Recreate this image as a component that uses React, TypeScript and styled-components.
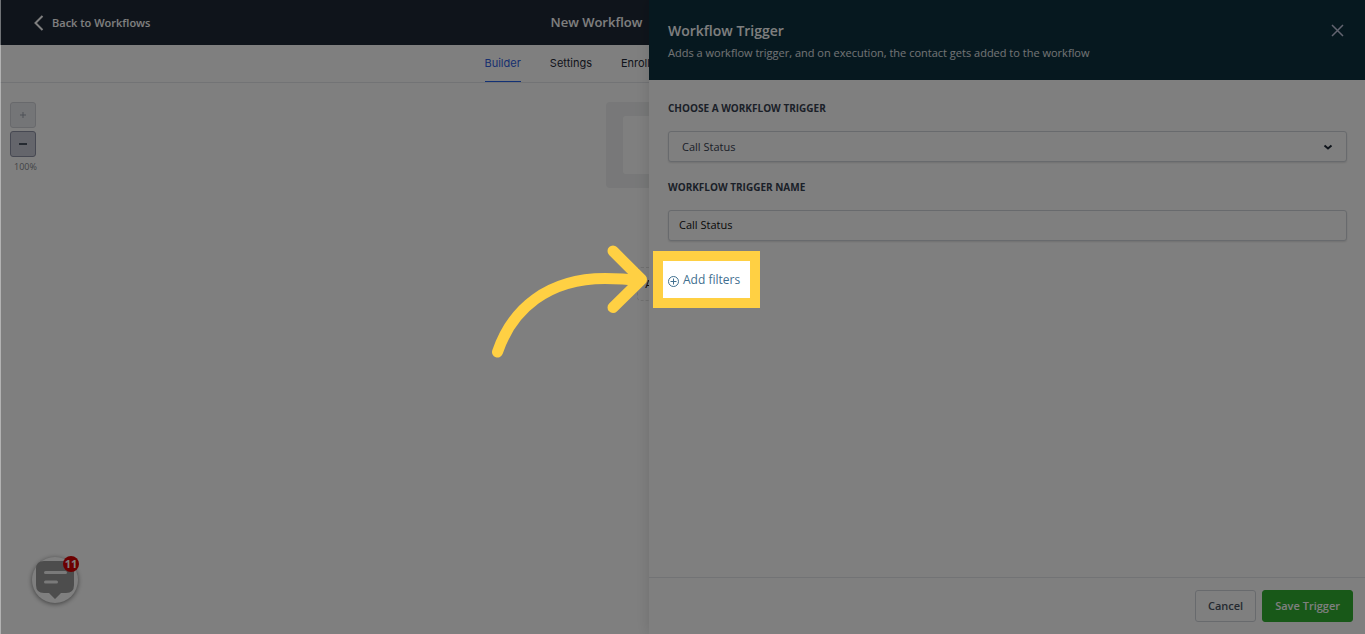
import React from "react";
import styled, { createGlobalStyle } from "styled-components";

const GlobalStyle = createGlobalStyle`
  *, *::before, *::after { box-sizing: border-box; }
  body { margin: 0; background: #fff; }
  body, button, input, select {
    font-family: "Open Sans", "Noto Sans", sans-serif;
    font-size: 11px;
    line-height: 16px;
  }
  h1, h2, p { margin: 0; }
`;

const Page = styled.div`
  position: relative;
  display: flex;
  flex-direction: column;
  min-height: 100vh;
  overflow: hidden;
  background: #fff;
`;

const TopBar = styled.header`
  display: grid;
  grid-template-columns: 1fr 264px 1fr;
  align-items: center;
  height: 45px;
  background: #1f2937;
  color: #fff;
`;

const BackLink = styled.a`
  display: flex;
  align-items: center;
  gap: 8px;
  padding-left: 34px;
  color: #fff;
  font-weight: 600;
  text-decoration: none;
`;

const PageTitle = styled.h1`
  padding-bottom: 2px;
  font-size: 13px;
  line-height: 20px;
  font-weight: 600;
`;

const TabBar = styled.nav`
  display: flex;
  justify-content: center;
  height: 38px;
  border-bottom: 1px solid #e5e7eb;
`;

const TabList = styled.div`
  display: flex;
  gap: 29px;
  width: 396px;
`;

const Tab = styled.a<{ $active?: boolean }>`
  padding: 10px 0;
  border-bottom: 1px solid ${(p) => (p.$active ? "#2563eb" : "transparent")};
  color: ${(p) => (p.$active ? "#3060e0" : "#1f2937")};
  font-family: Inter, sans-serif;
  white-space: nowrap;
  text-decoration: none;
`;

const Canvas = styled.main`
  position: relative;
  flex: 1;
  display: flex;
  flex-direction: column;
  align-items: center;
  gap: 79px;
  padding-top: 19px;
`;

const ZoomTools = styled.div`
  position: absolute;
  top: 19px;
  left: 10px;
  display: flex;
  flex-direction: column;
  gap: 3px;
`;

const ZoomButton = styled.button`
  display: grid;
  place-items: center;
  width: 26px;
  height: 26px;
  padding: 0;
  border: 1px solid #8c90a4;
  border-radius: 3px;
  background: #c8cad6;
  color: #4b5563;
  &:disabled {
    border-color: #d0d2d8;
    background: #e9eaee;
    color: #9ca3af;
  }
`;

const ZoomLevel = styled.span`
  padding-left: 4px;
  color: #85878c;
  font-size: 9px;
  line-height: 14px;
`;

const TriggerNode = styled.div`
  width: 153px;
  height: 86px;
  padding: 14px 17px;
  border-radius: 4px;
  background: #f0f1f2;
`;

const NodeCard = styled.div`
  height: 58px;
  border-radius: 3px;
  background: #fff;
`;

const ActionNode = styled.div`
  width: 91px;
  padding: 8px 7px;
  border: 1px dashed #e2e2e2;
  border-radius: 4px;
  color: #222;
  white-space: nowrap;
  font-family: Inter, sans-serif;
`;

const ChatButton = styled.button`
  position: absolute;
  left: 32px;
  bottom: 31px;
  width: 46px;
  height: 46px;
  padding: 0;
  border: 0;
  border-radius: 50%;
  background: #fff;
  box-shadow: 0 1px 5px rgba(0, 0, 0, 0.5);
  svg { display: block; }
`;

const ChatBadge = styled.span`
  position: absolute;
  top: -1px;
  right: -1px;
  width: 16px;
  height: 16px;
  border-radius: 50%;
  background: #d80000;
  color: #fff;
  font-weight: 700;
`;

const Drawer = styled.aside`
  position: absolute;
  inset: 0 0 0 auto;
  z-index: 1;
  display: flex;
  flex-direction: column;
  width: 716px;
  max-width: 100%;
  background: #fff;
  box-shadow: 0 0 14px rgba(0, 0, 0, 0.14);
`;

const DrawerHeader = styled.header`
  display: flex;
  justify-content: space-between;
  align-items: flex-start;
  height: 80px;
  padding: 21px 21px 0 19px;
  background: #0c303e;
  color: #fff;
`;

const DrawerTitle = styled.h2`
  font-size: 14px;
  line-height: 20px;
  font-weight: 600;
`;

const DrawerText = styled.p`
  padding-top: 4px;
  color: #e2e6e9;
`;

const CloseButton = styled.button`
  padding: 3px 0;
  border: 0;
  background: none;
  color: #c4c8e0;
  svg { display: block; }
`;

const DrawerBody = styled.div`
  flex: 1;
  display: flex;
  flex-direction: column;
  align-items: stretch;
  padding: 20px 18px 20px 19px;
`;

const FieldLabel = styled.label`
  margin-bottom: 15px;
  color: #374151;
  font-size: 10px;
  font-weight: 700;
  text-transform: uppercase;
`;

const SelectWrap = styled.div`
  position: relative;
  display: flex;
  margin-bottom: 17px;
  svg {
    position: absolute;
    top: 11px;
    right: 14px;
    pointer-events: none;
  }
`;

const fieldBox = `
  width: 100%;
  height: 31px;
  border: 1px solid #d1d5db;
  border-radius: 3px;
  background: #fff;
  box-shadow: 0 1px 2px rgba(0, 0, 0, 0.12);
`;

const Select = styled.select`
  ${fieldBox}
  appearance: none;
  padding: 0 13px;
  color: #374151;
`;

const TextInput = styled.input`
  ${fieldBox}
  margin-bottom: 20px;
  padding: 0 10px 2px;
  color: #111;
`;

const Spotlight = styled.div`
  position: relative;
  z-index: 2;
  align-self: flex-start;
  margin-left: -5px;
  &::before {
    content: "";
    position: absolute;
    inset: -10px;
    border: 10px solid #ffd043;
    box-shadow: 0 0 0 9999px rgba(0, 0, 0, 0.5);
    pointer-events: none;
  }
`;

const AddFilters = styled.button`
  display: flex;
  align-items: center;
  gap: 4px;
  width: 87px;
  height: 37px;
  padding: 0 5px;
  border: 0;
  background: #fff;
  color: #3f6f8f;
  font-size: 12px;
  white-space: nowrap;
  svg { flex: none; margin-top: 3px; }
`;

const Arrow = styled.svg`
  position: absolute;
  top: -21px;
  left: -177px;
  pointer-events: none;
`;

const DrawerFooter = styled.footer`
  display: flex;
  justify-content: flex-end;
  gap: 6px;
  padding: 12px;
  border-top: 1px solid #e5e7eb;
`;

const ActionButton = styled.button<{ $primary?: boolean }>`
  height: 32px;
  padding: 0 12px;
  border: 1px solid ${(p) => (p.$primary ? "#30b030" : "#d1d5db")};
  border-radius: 3px;
  background: ${(p) => (p.$primary ? "#30b030" : "#fff")};
  color: ${(p) => (p.$primary ? "#fff" : "#4b5563")};
  font-weight: 600;
`;

const EdgeLine = styled.div`
  position: absolute;
  inset: 0 auto 0 0;
  z-index: 3;
  width: 1px;
  background: rgba(255, 255, 255, 0.4);
`;

export default function App() {
  return (
    <Page>
      <GlobalStyle />
      <TopBar>
        <BackLink href="#workflows">
          <svg width="10" height="16" viewBox="0 0 10 16" fill="none" stroke="currentColor" strokeWidth="2">
            <path d="M8.5 1 1.5 8l7 7" />
          </svg>
          Back to Workflows
        </BackLink>
        <PageTitle>New Workflow</PageTitle>
      </TopBar>
      <TabBar>
        <TabList>
          <Tab href="#builder" $active>Builder</Tab>
          <Tab href="#settings">Settings</Tab>
          <Tab href="#enroll">Enroll</Tab>
        </TabList>
      </TabBar>
      <Canvas>
        <ZoomTools>
          <ZoomButton type="button" aria-label="Zoom in" disabled>
            <svg width="6" height="6" viewBox="0 0 6 6" stroke="currentColor">
              <path d="M3 0v6M0 3h6" />
            </svg>
          </ZoomButton>
          <ZoomButton type="button" aria-label="Zoom out">
            <svg width="8" height="2" viewBox="0 0 8 2" stroke="currentColor" strokeWidth="2">
              <path d="M0 1h8" />
            </svg>
          </ZoomButton>
          <ZoomLevel>100%</ZoomLevel>
        </ZoomTools>
        <TriggerNode>
          <NodeCard />
        </TriggerNode>
        <ActionNode>Add</ActionNode>
        <ChatButton type="button" aria-label="Open chat">
          <svg width="46" height="46" viewBox="0 0 46 46">
            <path
              fill="#9a9a9a"
              d="M12 4h22q8 0 8 8v16q0 8-8 8h-5l-6 6-6-6h-5q-8 0-8-8V12q0-8 8-8Z"
            />
            <path d="M13.500 15.500h20M13.500 25h11" stroke="#f4f4f4" strokeWidth="3" strokeLinecap="round" />
          </svg>
          <ChatBadge>11</ChatBadge>
        </ChatButton>
      </Canvas>

      <Drawer>
        <DrawerHeader>
          <div>
            <DrawerTitle>Workflow Trigger</DrawerTitle>
            <DrawerText>
              Adds a workflow trigger, and on execution, the contact gets added to the workflow
            </DrawerText>
          </div>
          <CloseButton type="button" aria-label="Close">
            <svg width="13" height="13" viewBox="0 0 13 13" stroke="currentColor" strokeWidth="1.500">
              <path d="m1 1 11 11M12 1 1 12" />
            </svg>
          </CloseButton>
        </DrawerHeader>
        <DrawerBody>
          <FieldLabel htmlFor="trigger">Choose a workflow trigger</FieldLabel>
          <SelectWrap>
            <Select id="trigger" defaultValue="call">
              <option value="call">Call Status</option>
            </Select>
            <svg width="10" height="10" viewBox="0 0 10 10" fill="none" stroke="#1f2937" strokeWidth="2">
              <path d="m1.500 3.500 3.500 3 3.500-3" />
            </svg>
          </SelectWrap>
          <FieldLabel htmlFor="trigger-name">Workflow trigger name</FieldLabel>
          <TextInput id="trigger-name" type="text" defaultValue="Call Status" />
          <Spotlight>
            <AddFilters type="button">
              <svg width="11" height="11" viewBox="0 0 11 11" fill="none" stroke="currentColor">
                <circle cx="5.500" cy="5.500" r="5" />
                <path d="M5.500 2.500v6M2.500 5.500h6" />
              </svg>
              Add filters
            </AddFilters>
            <Arrow width="170" height="124" viewBox="486 240 170 124" fill="none" stroke="#ffd043" strokeWidth="11" strokeLinecap="round" strokeLinejoin="round" aria-hidden="true">
              <path d="M497.500 352C512 309 548 278.500 605 278.500Q623 278.500 640 280.500" />
              <path d="M613 251l28.500 28.500L613 307.500" />
            </Arrow>
          </Spotlight>
        </DrawerBody>
        <DrawerFooter>
          <ActionButton type="button">Cancel</ActionButton>
          <ActionButton type="button" $primary>Save Trigger</ActionButton>
        </DrawerFooter>
      </Drawer>
      <EdgeLine />
    </Page>
  );
}
